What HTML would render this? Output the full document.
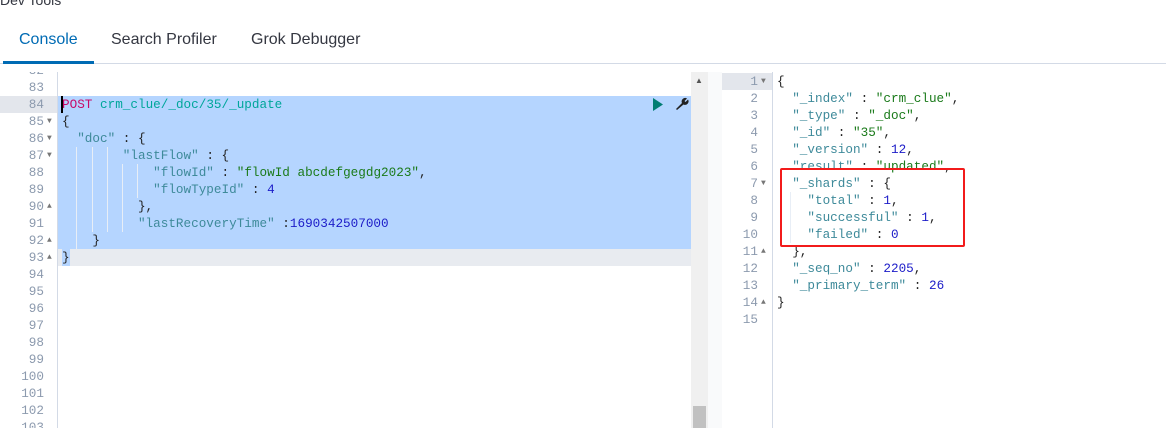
<!DOCTYPE html>
<html><head><meta charset="utf-8"><style>
*{margin:0;padding:0;box-sizing:border-box}
body{width:1166px;height:428px;overflow:hidden;background:#fff;font-family:"Liberation Sans",sans-serif;position:relative}
.a{position:absolute}
.m{font-family:"Liberation Mono",monospace;font-size:12.66px;line-height:17px;white-space:pre}
.ln{color:#8c9aae;text-align:right}
.k{color:#c80a68}.u{color:#00a69b}.v{color:#3e8a9a}.s{color:#1a7a1a}.n{color:#1c1cc8}.b{color:#222}
.fa{color:#777;font-size:8px}
</style></head><body>
<div class="a" style="left:0;top:-8px;font-size:14px;color:#343741">Dev Tools</div>
<div class="a" style="left:19px;top:31px;font-size:16px;color:#006bb4">Console</div>
<div class="a" style="left:111px;top:31px;font-size:16px;color:#343741">Search Profiler</div>
<div class="a" style="left:251px;top:31px;font-size:16px;color:#343741">Grok Debugger</div>
<div class="a" style="left:0;top:63px;width:1166px;height:1px;background:#d3dae6"></div>
<div class="a" style="left:3px;top:61px;width:91px;height:3px;background:#006bb4"></div>

<!-- left editor -->
<div class="a" style="left:57px;top:72px;width:1px;height:356px;background:#d3dae6"></div>
<div class="a" style="left:0;top:96px;width:57px;height:17px;background:#e3e6ec"></div>
<div class="a" style="left:58px;top:96px;width:633px;height:153px;background:#b5d5ff"></div>
<div class="a" style="left:58px;top:249px;width:633px;height:17px;background:#e8ebf0"></div>
<div class="a" style="left:62px;top:249px;width:8px;height:17px;background:#b5d5ff"></div>
<div class="a" style="left:61px;top:96px;width:2px;height:17px;background:#000"></div>
<div class="a" style="left:76px;top:147px;width:1px;height:102px;background:#e8eef6"></div>
<div class="a" style="left:92px;top:147px;width:1px;height:85px;background:#e8eef6"></div>
<div class="a" style="left:107px;top:147px;width:1px;height:85px;background:#e8eef6"></div>
<div class="a" style="left:122px;top:164px;width:1px;height:68px;background:#e8eef6"></div>
<div class="a" style="left:137px;top:164px;width:1px;height:34px;background:#e8eef6"></div>
<div class="a" style="left:0;top:72px;width:57px;height:356px;overflow:hidden">
<div class="a m ln" style="left:0;top:-10px;width:44px">82
83
84
85
86
87
88
89
90
91
92
93
94
95
96
97
98
99
100
101
102
103</div></div>
<div class="a m fa" style="left:47px;top:113px;line-height:17px">▼
▼
▼


▲

▲
▲</div>
<div class="a m" style="left:62px;top:96px"><span class="k">POST</span> <span class="u">crm_clue/_doc/35/_update</span>
<span class="b">{</span>
  <span class="v">"doc"</span> <span class="b">: {</span>
        <span class="v">"lastFlow"</span> <span class="b">: {</span>
            <span class="v">"flowId"</span> <span class="b">:</span> <span class="s">"flowId abcdefgegdg2023"</span><span class="b">,</span>
            <span class="v">"flowTypeId"</span> <span class="b">:</span> <span class="n">4</span>
          <span class="b">},</span>
          <span class="v">"lastRecoveryTime"</span> <span class="b">:</span><span class="n">1690342507000</span>
    <span class="b">}</span>
<span class="b">}</span></div>
<svg class="a" style="left:652px;top:98px" width="12" height="13"><path d="M1 0 L11 6.5 L1 13Z" fill="#017d73"/></svg>
<svg class="a" style="left:675px;top:97px" width="14" height="14" viewBox="0 0 14 14"><path d="M2 13 L1 12 L7 6 A3.5 3.5 0 0 1 12 1.5 L9.5 4 L10.5 5 L13 2.5 A3.5 3.5 0 0 1 8.5 7.5 Z" fill="#222"/></svg>
<div class="a" style="left:691px;top:72px;width:17px;height:356px;background:#f0f0f0"></div>
<div class="a fa" style="left:695px;top:76px;color:#555">▲</div>
<div class="a" style="left:693px;top:406px;width:13px;height:22px;background:#c1c1c1"></div>
<div class="a" style="left:708px;top:72px;width:14px;height:356px;background:#f9fafb"></div>

<!-- right -->
<div class="a" style="left:722px;top:73px;width:50px;height:17px;background:#e3e6ec"></div>
<div class="a" style="left:772px;top:72px;width:1px;height:356px;background:#d3dae6"></div>
<div class="a m ln" style="left:722px;top:73px;width:36px">1
2
3
4
5
6
7
8
9
10
11
12
13
14
15</div>
<div class="a m fa" style="left:761px;top:73px">▼





▼



▲


▲</div>
<div class="a" style="left:790px;top:192px;width:1px;height:51px;background:#e8eef6"></div>
<div class="a m" style="left:777px;top:73px"><span class="b">{</span>
  <span class="v">"_index"</span> <span class="b">:</span> <span class="s">"crm_clue"</span><span class="b">,</span>
  <span class="v">"_type"</span> <span class="b">:</span> <span class="s">"_doc"</span><span class="b">,</span>
  <span class="v">"_id"</span> <span class="b">:</span> <span class="s">"35"</span><span class="b">,</span>
  <span class="v">"_version"</span> <span class="b">:</span> <span class="n">12</span><span class="b">,</span>
  <span class="v">"result"</span> <span class="b">:</span> <span class="s">"updated"</span><span class="b">,</span>
  <span class="v">"_shards"</span> <span class="b">: {</span>
    <span class="v">"total"</span> <span class="b">:</span> <span class="n">1</span><span class="b">,</span>
    <span class="v">"successful"</span> <span class="b">:</span> <span class="n">1</span><span class="b">,</span>
    <span class="v">"failed"</span> <span class="b">:</span> <span class="n">0</span>
  <span class="b">},</span>
  <span class="v">"_seq_no"</span> <span class="b">:</span> <span class="n">2205</span><span class="b">,</span>
  <span class="v">"_primary_term"</span> <span class="b">:</span> <span class="n">26</span>
<span class="b">}</span></div>
<div class="a" style="left:780px;top:168px;width:185px;height:79px;border:2px solid #f21b1b;border-radius:2px"></div>
</body></html>
